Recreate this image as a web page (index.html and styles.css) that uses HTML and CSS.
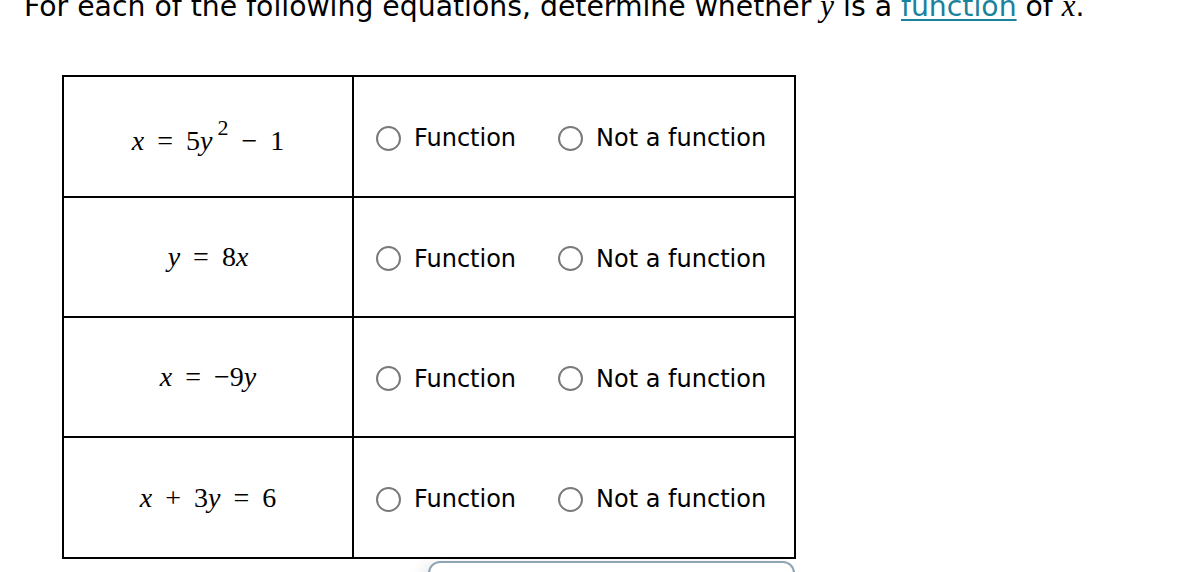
FILE: index.html
```html
<!DOCTYPE html>
<html>
<head>
<meta charset="utf-8">
<link rel="stylesheet" href="styles.css">
</head>
<body>
<div class="page">
  <p class="prompt">For each of the following equations, determine whether <span class="mv">y</span> is a <a class="link" href="#">function</a> of <span class="mv">x</span>.</p>
  <table class="grid">
    <colgroup><col class="c1"><col class="c2"></colgroup>
    <tr>
      <td class="eq"><span class="math"><i>x</i> = 5<i>y</i><span class="sup">2</span> &minus; 1</span></td>
      <td class="ans"><div class="opts"><label class="opt"><span class="radio"></span>Function</label><label class="opt"><span class="radio"></span>Not a function</label></div></td>
    </tr>
    <tr>
      <td class="eq"><span class="math"><i>y</i> = 8<i>x</i></span></td>
      <td class="ans"><div class="opts"><label class="opt"><span class="radio"></span>Function</label><label class="opt"><span class="radio"></span>Not a function</label></div></td>
    </tr>
    <tr>
      <td class="eq"><span class="math"><i>x</i> = &minus;9<i>y</i></span></td>
      <td class="ans"><div class="opts"><label class="opt"><span class="radio"></span>Function</label><label class="opt"><span class="radio"></span>Not a function</label></div></td>
    </tr>
    <tr>
      <td class="eq"><span class="math"><i>x</i> + 3<i>y</i> = 6</span></td>
      <td class="ans"><div class="opts"><label class="opt"><span class="radio"></span>Function</label><label class="opt"><span class="radio"></span>Not a function</label></div></td>
    </tr>
  </table>
  <div class="footer-row"><div class="panel"></div></div>
</div>
</body>
</html>
```
FILE: styles.css
```css
html, body {
  margin: 0;
  padding: 0;
  background: #fff;
  overflow: hidden;
}
.page {
  padding-left: 24px;
  font-family: "DejaVu Sans", Verdana, sans-serif;
  color: #000;
}
.prompt {
  margin: -11px 0 0 0;
  font-size: 28.3px;
  line-height: 34px;
  white-space: nowrap;
}
.mv {
  font-family: "Liberation Serif", "Times New Roman", serif;
  font-style: italic;
  font-size: 31px;
}
.link {
  color: #1b819c;
  text-decoration: underline;
  text-decoration-thickness: 2px;
  text-underline-offset: 3px;
}
.grid {
  margin-top: 51px;
  margin-left: 38px;
  border-collapse: collapse;
  width: 734px;
  table-layout: fixed;
}
.c1 { width: 290px; }
.grid td {
  border: 2px solid #000;
  height: 115px;
  padding: 0;
  vertical-align: middle;
}
.grid tr:first-child td,
.grid tr:last-child td {
  height: 116px;
}
.eq {
  text-align: center;
}
.math {
  font-family: "Liberation Serif", "Times New Roman", serif;
  font-size: 28px;
  word-spacing: 6px;
  line-height: 30px;
}
.math i {
  font-style: italic;
}
.sup {
  font-size: 22px;
  vertical-align: 15px;
  line-height: 1;
  margin-left: 5px;
}
.ans {
  padding-left: 22px !important;
  padding-top: 3px !important;
}
.opts {
  display: flex;
  align-items: center;
  gap: 42px;
  font-size: 24px;
}
.opt {
  display: flex;
  align-items: center;
  gap: 13px;
}
.radio {
  width: 21px;
  height: 21px;
  border: 2px solid #7a7a7a;
  border-radius: 50%;
  flex: none;
}
.footer-row {
  display: flex;
  padding-left: 404px;
  padding-top: 2px;
}
.panel {
  width: 363px;
  height: 40px;
  border: 2px solid #8fa5b3;
  border-radius: 12px;
  box-shadow: -8px 0 12px rgba(0,0,0,0.06);
}
```
